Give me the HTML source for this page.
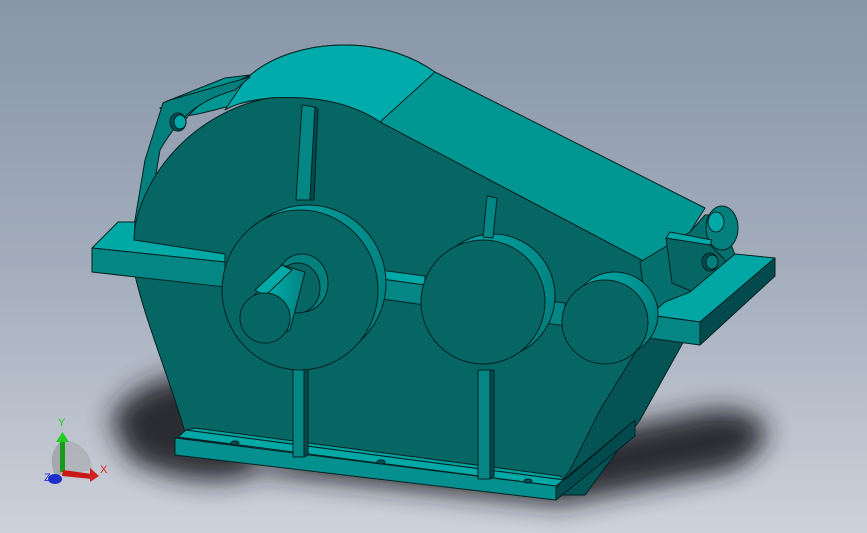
<!DOCTYPE html>
<html><head><meta charset="utf-8"><style>
html,body{margin:0;padding:0;width:867px;height:533px;overflow:hidden}
svg{display:block}
</style></head><body>
<svg width="867" height="533" viewBox="0 0 867 533" xmlns="http://www.w3.org/2000/svg">
<defs>
<linearGradient id="bg" x1="0" y1="0" x2="0" y2="1">
<stop offset="0" stop-color="#8896a8"/><stop offset="0.5" stop-color="#a3adbc"/><stop offset="1" stop-color="#cdd1da"/>
</linearGradient>
<filter id="bl" x="-30%" y="-30%" width="160%" height="160%"><feGaussianBlur stdDeviation="13"/></filter>
<radialGradient id="cyl" cx="0.3" cy="0.3" r="0.8"><stop offset="0" stop-color="#00b0ae"/><stop offset="1" stop-color="#007c7a"/></radialGradient>
</defs>
<rect width="867" height="533" fill="url(#bg)"/>
<g filter="url(#bl)" fill="#1c1c22" opacity="0.9">
<path d="M110,420 C130,380 190,365 240,380 L260,470 C230,490 170,480 130,460 Z"/>
<path d="M240,470 L560,505 L730,470 C790,440 770,405 710,410 L560,440 L300,450 Z"/>
</g>
<g stroke="#022" stroke-width="1" stroke-linejoin="round">
<path d="M640,262 L700,225 L690,330 L640,420 L585,495 L555,495 L600,410 Z" fill="#045456"/>
<path d="M635,420 L635,436 L556,500 L556,486 Z" fill="#034a4e"/>
<path d="M160,108 L245,80 C270,55 310,45 345,45 C385,45 415,58 435,72 L705,208 L690,232 L645,262 L380,122 C355,105 320,95 270,98 C215,105 180,128 160,108 Z" fill="#009692"/>
<path d="M245,80 C270,55 310,45 345,45 C385,45 415,58 435,72 L380,122 C355,105 320,95 270,98 C250,100 235,104 225,110 Z" fill="#00abab"/>
<path d="M165,102 L225,78 L250,75 L230,85 C210,95 190,110 178,130 L163,112 Z" fill="#02908c"/>
<path d="M163,103 L170,100 L250,77 L235,90 C200,100 180,115 160,150 L150,210 L133,232 L145,160 Z" fill="#03807e"/>
<ellipse cx="178" cy="122" rx="8" ry="9" fill="#024e52"/>
<ellipse cx="180" cy="122" rx="6" ry="7" fill="#00a6a4"/>
<path d="M133,240 C140,170 200,110 270,98 C320,95 355,105 380,122 L645,262 L652,300 L640,345 L600,410 L570,470 L555,490 L185,432 C170,380 145,320 135,275 Z" fill="#056663"/>
<path d="M640,262 L690,232 L705,215 L720,215 L735,255 L700,300 L660,320 L645,300 Z" fill="#04706e"/>
<ellipse cx="722" cy="228" rx="16" ry="22" fill="#03807e"/>
<ellipse cx="716" cy="222" rx="8" ry="10" fill="#00a8a6"/>
<path d="M666,238 L710,245 L725,260 L732,290 L700,295 L672,283 Z" fill="#056663"/>
<path d="M666,238 L670,232 L712,240 L710,245 Z" fill="#00a8a6"/>
<ellipse cx="710" cy="262" rx="8" ry="9" fill="#024e52"/>
<ellipse cx="712" cy="262" rx="6" ry="7" fill="#03807e"/>
<path d="M650,315 L700,322 L775,258 L735,254 L690,292 L665,302 Z" fill="#00a6a4"/>
<path d="M700,322 L775,258 L775,276 L700,345 Z" fill="#034a4e"/>
<path d="M648,315 L700,322 L700,345 L648,338 Z" fill="#038684"/>
<path d="M92,248 L118,222 L135,222 L134,240 L225,254 L225,262 Z" fill="#00a8a6"/>
<path d="M92,248 L225,262 L225,287 L92,272 Z" fill="#038684"/>
<path d="M375,278 L425,285 L425,305 L375,298 Z" fill="#038684"/>
<path d="M375,278 L380,270 L425,276 L425,285 Z" fill="#00a8a6"/>
<path d="M540,300 L565,303 L565,326 L540,322 Z" fill="#038684"/>
<path d="M178,437 L186,430 L565,480 L635,420 L635,420 L556,486 Z" fill="#00a8a6"/>
<path d="M186,430 L195,428 L560,476 L565,480 Z" fill="#00a2a0"/>
<path d="M175,438 L556,486 L556,500 L175,455 Z" fill="#03908e"/>
<ellipse cx="235" cy="443" rx="4" ry="2" fill="#024e52"/>
<ellipse cx="381" cy="462" rx="4" ry="2" fill="#024e52"/>
<ellipse cx="528" cy="481" rx="4" ry="2" fill="#024e52"/>
<path d="M302,105 L315,107 L310,200 L296,200 Z" fill="#038684"/>
<path d="M315,107 L318,109 L314,200 L310,200 Z" fill="#034a4e"/>
<path d="M293,365 L304,365 L304,457 L293,457 Z" fill="#038684"/>
<path d="M304,365 L308,366 L308,455 L304,457 Z" fill="#034a4e"/>
<path d="M478,370 L490,370 L490,479 L478,479 Z" fill="#038684"/>
<path d="M490,370 L494,370 L494,476 L490,479 Z" fill="#034a4e"/>
<ellipse cx="308" cy="283" rx="78" ry="78" fill="url(#cyl)"/>
<ellipse cx="300" cy="290" rx="78" ry="80" fill="#056663"/>
<ellipse cx="302" cy="283" rx="26" ry="29" fill="#03807e"/>
<ellipse cx="298" cy="288" rx="22" ry="25" fill="#056663"/>
<path d="M250,300 L282,265 L305,272 L290,330 L262,342 Z" fill="url(#cyl)"/>
<path d="M255,290 L282,265 L292,270 L265,296 Z" fill="#00a8a6"/>
<ellipse cx="265" cy="318" rx="25" ry="25" fill="#056663"/>
<ellipse cx="493" cy="296" rx="62" ry="62" fill="url(#cyl)"/>
<ellipse cx="483" cy="302" rx="62" ry="62" fill="#056663"/>
<path d="M487,196 L497,198 L493,238 L483,237 Z" fill="#038684"/>
<ellipse cx="615" cy="314" rx="43" ry="42" fill="url(#cyl)"/>
<ellipse cx="605" cy="322" rx="43" ry="42" fill="#056663"/>
</g>
<g font-family="Liberation Sans, sans-serif" font-size="11">
<path d="M55,475 A28,28 0 0 1 62,440 L62,475 Z" fill="#888" opacity="0.5"/>
<path d="M62,440 A30,30 0 0 1 92,470 L62,475 Z" fill="#999" opacity="0.4"/>
<rect x="60" y="440" width="5" height="32" fill="#1a9a1a"/>
<path d="M56,442 L62.5,432 L69,442 Z" fill="#22cc22"/>
<path d="M63,470 L92,474 L92,479 L62,476 Z" fill="#c81818"/>
<path d="M90,468 L99,476 L90,482 Z" fill="#d02020"/>
<ellipse cx="55" cy="479" rx="7" ry="5" fill="#1f2fcc"/>
<text x="58" y="426" fill="#22cc22">Y</text>
<text x="100" y="473" fill="#dd2222">X</text>
<text x="44" y="481" fill="#2233dd">Z</text>
</g>
</svg>
</body></html>
